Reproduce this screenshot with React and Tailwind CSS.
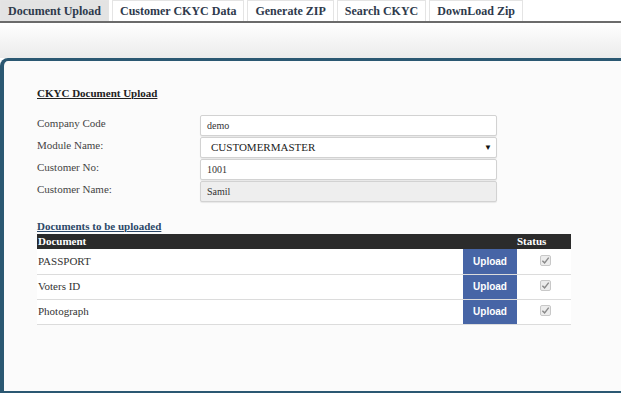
import React from 'react';

const tabs = ['Document Upload', 'Customer CKYC Data', 'Generate ZIP', 'Search CKYC', 'DownLoad Zip'];

const fields = [
    { label: 'Company Code', value: 'demo', type: 'input' },
    { label: 'Module Name:', value: 'CUSTOMERMASTER', type: 'select' },
    { label: 'Customer No:', value: '1001', type: 'input' },
    { label: 'Customer Name:', value: 'Samil', type: 'disabled' },
];

const documents = ['PASSPORT', 'Voters ID', 'Photograph'];

const CheckMark = () => (
    <span className="inline-flex w-[11px] h-[11px] items-center justify-center rounded-[2px] border border-[#c8c8c8] bg-[#ececec]">
        <svg width="9" height="9" viewBox="0 0 10 10">
            <path d="M1.5 5.2 L4 7.6 L8.6 1.8" fill="none" stroke="#8a8a8a" strokeWidth="1.6" />
        </svg>
    </span>
);

const Field = ({ field }) => {
    if (field.type === 'select') {
        return (
            <div className="flex items-center justify-between h-[21px] w-[297px] border border-[#d2d2d2] rounded-[2px] bg-white shadow-[0_1px_1px_rgba(0,0,0,0.08)] pl-[10px] pr-[4px]">
                <span className="text-[11px] text-[#222]">{field.value}</span>
                <span className="text-[8px] text-[#111]">▼</span>
            </div>
        );
    }
    return (
        <div className={`flex items-center h-[21px] w-[297px] border border-[#d2d2d2] rounded-[2px] px-[6px] shadow-[0_1px_1px_rgba(0,0,0,0.08)] ${field.type === 'disabled' ? 'bg-[#eeeeee]' : 'bg-white'}`}>
            <span className="text-[10px] text-[#333]">{field.value}</span>
        </div>
    );
};

const App = () => {
    return (
        <div className="w-[624px] h-[396px] bg-white overflow-hidden font-['Liberation_Serif',serif]">
            <div className="flex gap-[3px] h-[23px] border-b-[2px] border-[#6b6b6b] w-[621px]">
                {tabs.map((tab, i) => (
                    <div
                        key={tab}
                        className={`flex items-center px-[7px] h-[21px] border border-b-0 border-[#e4e4e4] text-[12px] font-bold text-[#2e3a4c] ${i === 0 ? 'bg-[#e3e3e3]' : 'bg-white'}`}
                    >
                        {tab}
                    </div>
                ))}
            </div>
            <div className="h-[35px] bg-gradient-to-b from-white to-[#ebebeb] w-[621px]" />
            <div className="w-[621px] h-[335px] border-t-[3px] border-l-[4px] border-b-[2px] border-[#2b5872] rounded-tl-[8px] bg-[#fbfbfb] pl-[33px] pt-[27px]">
                <div className="text-[11px] font-bold underline text-[#222] leading-none">CKYC Document Upload</div>
                <div className="mt-[16px] flex flex-col gap-[1px]">
                    {fields.map(field => (
                        <div key={field.label} className="flex items-center">
                            <div className="w-[163px] text-[11px] text-[#444] -mt-[5px]">{field.label}</div>
                            <Field field={field} />
                        </div>
                    ))}
                </div>
                <div className="mt-[19px] w-[534px]">
                    <div className="text-[11px] font-bold underline text-[#2c4868] leading-none mb-[2px]">Documents to be uploaded</div>
                    <table className="w-full border-collapse text-[11px]">
                        <thead>
                            <tr className="bg-[#2b2b2b] text-white h-[15px]">
                                <th className="text-left font-bold px-[1px] py-0 leading-none">Document</th>
                                <th className="w-[54px]" />
                                <th className="w-[54px] text-left font-bold leading-none">Status</th>
                            </tr>
                        </thead>
                        <tbody>
                            {documents.map(doc => (
                                <tr key={doc} className="h-[25px] border-b border-[#dcdcdc] bg-white">
                                    <td className="px-[1px] text-[#333]">{doc}</td>
                                    <td className="bg-[#4765a6] text-center p-0">
                                        <span className="font-['Liberation_Sans',sans-serif] text-[10px] font-bold text-white">Upload</span>
                                    </td>
                                    <td className="text-center pl-[2px]">
                                        <CheckMark />
                                    </td>
                                </tr>
                            ))}
                        </tbody>
                    </table>
                </div>
            </div>
        </div>
    );
};

export default App;
